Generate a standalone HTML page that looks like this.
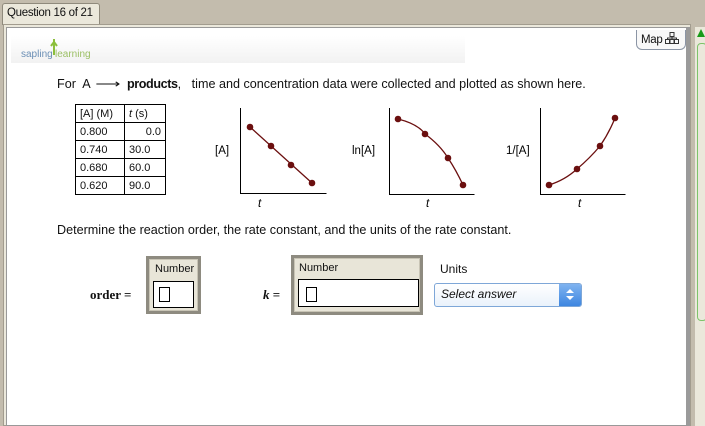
<!DOCTYPE html>
<html><head><meta charset="utf-8"><style>
*{margin:0;padding:0;box-sizing:border-box}
body{width:705px;height:426px;overflow:hidden;background:#c3bcad;font-family:"Liberation Sans",Arial,sans-serif;position:relative;color:#111}
.abs{position:absolute}
.tab{left:2px;top:3px;width:98px;height:22px;background:#ebe8db;border:1px solid #8f8a7c;border-bottom:none;border-radius:3px 3px 0 0;font-size:11.5px;padding:3px 0 0 4px;white-space:nowrap;letter-spacing:-0.3px}
.panel{left:3px;top:24px;width:688px;height:402px;background:#ebe8db;border:1px solid #a29c8e}
.white{left:6px;top:27px;width:684px;height:399px;background:#fff;border:1px solid #999;border-right:4px solid #9a9a9a}
.logo{left:11px;top:36px;width:454px;height:27px;background:linear-gradient(#fff,#f2f2f2)}
.map{left:636px;top:30px;width:50px;height:20px;border:1px solid #8b95a5;border-top:none;border-radius:0 0 6px 6px;background:#f8f8f8;font-size:11.5px;padding:2px 0 0 4px;white-space:nowrap;letter-spacing:-0.3px}
.sb{left:695px;top:27px;width:10px;height:399px;background:#ebe8db}
.thumb{left:697px;top:43px;width:10px;height:278px;border:1px solid #7ec36a;border-radius:4px;background:#ebe8db}
table{border-collapse:collapse;font-size:11px}
td{border:1px solid #000;height:18px;padding:0 4px}
.nb{background:#e8e5d8;border:3px solid #8e8b80;box-shadow:inset 0 0 0 1px #c8c4b5;font-size:11px}
.inp{background:#fff;border:1px solid #000;position:absolute}
.cur{position:absolute;width:11px;height:15px;border:1px solid #000}
</style></head><body>
<div class="abs tab">Question 16 of 21</div>
<div class="abs panel"></div>
<div class="abs white"></div>
<div class="abs logo">
<svg width="60" height="27" style="position:absolute;left:0;top:0"><path d="M43 6 l-3 4 M43 6 l3 4 M43 3v16" stroke="#8cbf3c" stroke-width="2" fill="none"/></svg>
<span class="abs" style="left:10px;top:13px;font-size:10px;color:#6b8fb5">sapling</span>
<span class="abs" style="left:44px;top:13px;font-size:10px;color:#9bbf64">learning</span>
</div>
<div class="abs map">Map <svg width="14" height="13" style="vertical-align:-2px"><rect x="5" y="0.5" width="4" height="4" fill="none" stroke="#333"/><rect x="0.5" y="7.5" width="4" height="4" fill="none" stroke="#333"/><rect x="5" y="7.5" width="4" height="4" fill="none" stroke="#333"/><rect x="9.5" y="7.5" width="4" height="4" fill="none" stroke="#333"/><path d="M7 4.5v3M2.5 7.5v-1.5h9v1.5" fill="none" stroke="#333"/></svg></div>
<div class="abs sb"></div>
<div class="abs" style="left:697px;top:29px;width:0;height:0;border-left:4px solid transparent;border-right:4px solid transparent;border-bottom:8px solid #1a9a1a"></div>
<div class="abs thumb"></div>

<div class="abs" style="left:57px;top:76px;font-size:12.6px;white-space:nowrap">For&nbsp; A <span style="display:inline-block;transform:scaleX(1.4);margin:0 6px">&#10230;</span> <b style="letter-spacing:-0.4px">products</b>, &nbsp; time and concentration data were collected and plotted as shown here.</div>

<table class="abs" style="left:75px;top:104px;width:91px">
<tr><td style="width:49px">[A] (M)</td><td><i>t</i> (s)</td></tr>
<tr><td>0.800</td><td style="text-align:right">0.0</td></tr>
<tr><td>0.740</td><td>30.0</td></tr>
<tr><td>0.680</td><td>60.0</td></tr>
<tr><td>0.620</td><td>90.0</td></tr>
</table>

<svg class="abs" style="left:0;top:0" width="705" height="426" font-family="Liberation Sans, Arial, sans-serif" font-size="11.5">
<g stroke="#000" fill="none" stroke-width="1">
<path d="M240.5 108v85.5h86"/><path d="M389.5 108v86.5h85"/><path d="M540.5 108v86.5h85"/>
</g>
<g stroke="#6b0f0f" stroke-width="1.3" fill="none">
<path d="M250 127L312 183"/>
<path d="M398 119Q418 124 425 134Q440 145 448 158Q456 170 463 185"/>
<path d="M549 185Q565 180 577 169Q590 158 600 146Q609 133 615 118"/>
</g>
<g fill="#6b0f0f">
<circle cx="250" cy="127" r="3.3"/><circle cx="271" cy="146" r="3.3"/><circle cx="291" cy="165" r="3.3"/><circle cx="312" cy="183" r="3.3"/>
<circle cx="398" cy="119" r="3.3"/><circle cx="425" cy="134" r="3.3"/><circle cx="448" cy="158" r="3.3"/><circle cx="463" cy="185" r="3.3"/>
<circle cx="549" cy="185" r="3.3"/><circle cx="577" cy="169" r="3.3"/><circle cx="600" cy="146" r="3.3"/><circle cx="615" cy="118" r="3.3"/>
</g>
<text x="215" y="154">[A]</text><text x="352" y="154">ln[A]</text><text x="506" y="154">1/[A]</text>
<text x="258" y="207" font-style="italic">t</text><text x="426" y="207" font-style="italic">t</text><text x="578" y="207" font-style="italic">t</text>
</svg>

<div class="abs" style="left:57px;top:223px;font-size:12.6px;white-space:nowrap">Determine the reaction order, the rate constant, and the units of the rate constant.</div>

<div class="abs" style="left:90px;top:287px;font-family:'Liberation Serif',serif;font-weight:bold;font-size:13px">order =</div>
<div class="abs nb" style="left:146px;top:256px;width:55px;height:58px"><span class="abs" style="left:6px;top:4px">Number</span><div class="inp" style="left:4px;top:22px;width:41px;height:27px"><div class="cur" style="left:5px;top:5px"></div></div></div>

<div class="abs" style="left:263px;top:287px;font-family:'Liberation Serif',serif;font-weight:bold;font-size:13px"><i>k</i> =</div>
<div class="abs nb" style="left:291px;top:255px;width:132px;height:60px"><span class="abs" style="left:5px;top:4px">Number</span><div class="inp" style="left:4px;top:21px;width:121px;height:28px"><div class="cur" style="left:7px;top:7px"></div></div></div>

<div class="abs" style="left:440px;top:262px;font-size:12px">Units</div>
<div class="abs" style="left:434px;top:283px;width:148px;height:24px;border:1px solid #7ea7d8;border-radius:3px;background:linear-gradient(#fff,#eaf2fb);font-size:12px;font-style:italic;padding:3px 0 0 6px">Select answer
<div class="abs" style="right:0;top:0;width:22px;height:22px;background:linear-gradient(#7fb3f0,#3d86e0);border-radius:0 2px 2px 0"><div class="abs" style="left:7px;top:5px;border-left:4px solid transparent;border-right:4px solid transparent;border-bottom:4px solid #fff"></div><div class="abs" style="left:7px;top:12px;border-left:4px solid transparent;border-right:4px solid transparent;border-top:4px solid #fff"></div></div></div>
</body></html>
